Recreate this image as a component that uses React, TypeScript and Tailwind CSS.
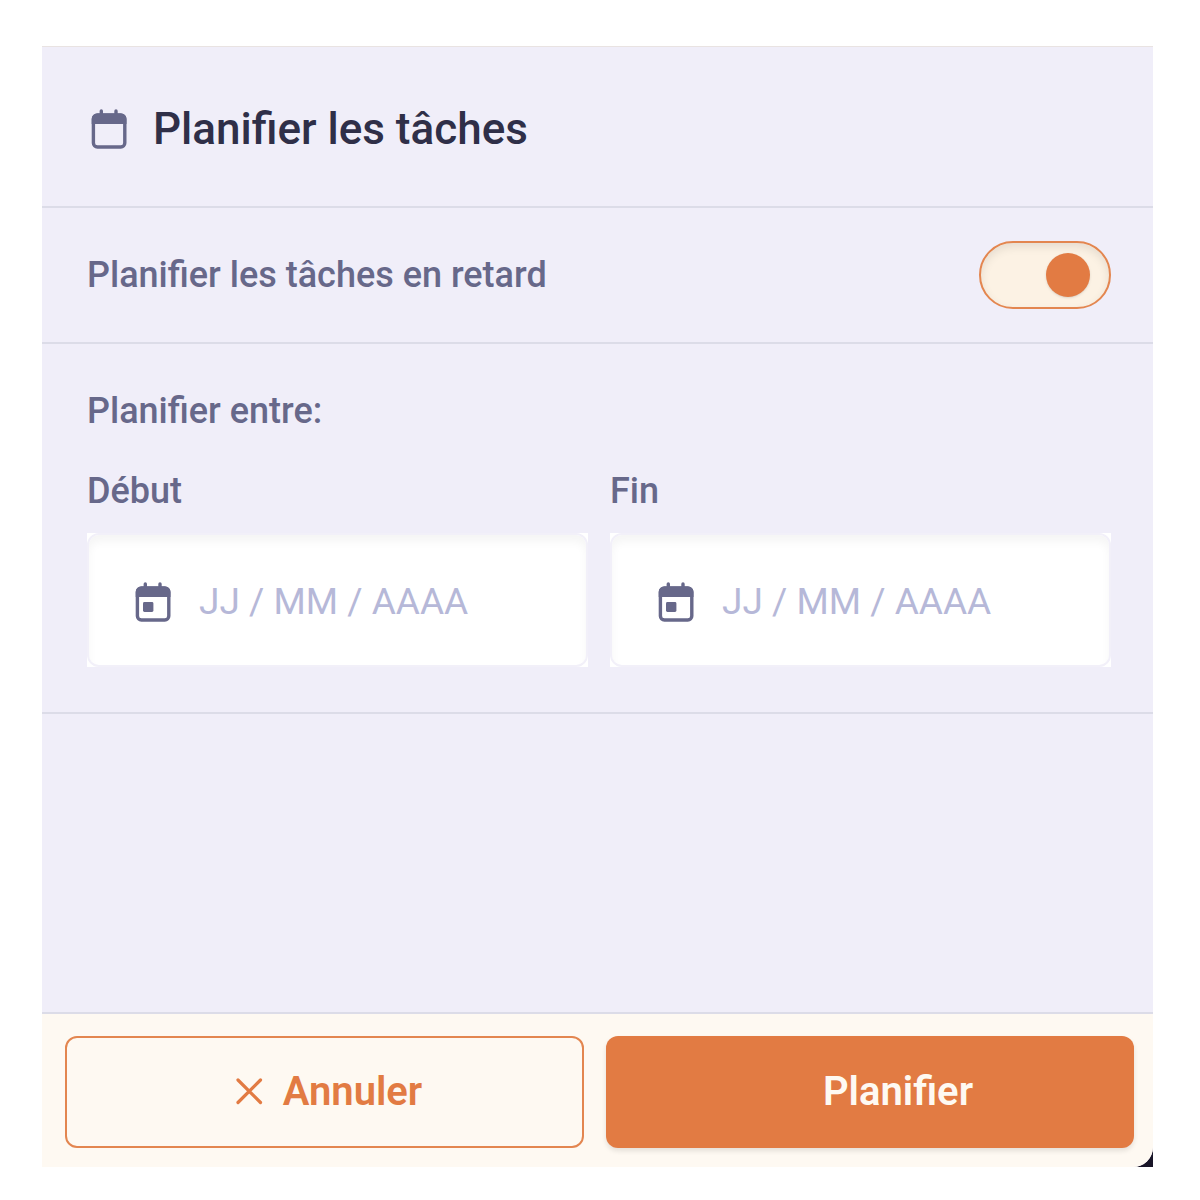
import React, { useState } from 'react';

interface CalendarIconProps {
  className?: string;
  withDay?: boolean;
}

const CalendarIcon: React.FC<CalendarIconProps> = ({ className, withDay = false }) => (
  <svg viewBox="0 0 36 40" className={className} fill="none" aria-hidden="true">
    <path d="M10.3 2v6M25 2v6" stroke="currentColor" strokeWidth="3.4" strokeLinecap="round" />
    <rect x="2.4" y="6" width="31.4" height="32" rx="4" stroke="currentColor" strokeWidth="3.4" />
    <path d="M.7 15V10a5.5 5.5 0 0 1 5.5-5.5H30a5.5 5.5 0 0 1 5.5 5.5v5z" fill="currentColor" />
    {withDay && <rect x="8" y="20" width="10.4" height="10" rx="1.4" fill="currentColor" />}
  </svg>
);

const CrossIcon: React.FC<{ className?: string }> = ({ className }) => (
  <svg viewBox="0 0 46 46" className={className} fill="none" aria-hidden="true">
    <path d="M11 11l22.5 22.5M33.5 11L11 33.5" stroke="currentColor" strokeWidth="3.2" strokeLinecap="round" />
  </svg>
);

interface DateFieldProps {
  id: string;
  label: string;
  value: string;
  onChange: (value: string) => void;
}

const DateField: React.FC<DateFieldProps> = ({ id, label, value, onChange }) => (
  <div className="min-w-0 flex-1">
    <label htmlFor={id} className="block text-[36px] leading-[60px] font-medium">
      {label}
    </label>
    <div className="mt-3 bg-white">
      <div className="flex h-[134px] items-center gap-7 rounded-xl border-2 border-[#f2f0f9] px-[46px] pt-1 shadow-[inset_0_7px_9px_rgba(0,0,0,0.04)]">
        <CalendarIcon className="h-10 w-9 shrink-0" withDay />
        <input
          id={id}
          type="text"
          value={value}
          onChange={(e) => onChange(e.target.value)}
          placeholder="JJ / MM / AAAA"
          className="w-full min-w-0 bg-transparent text-[37px] leading-[60px] outline-none placeholder:text-[#b6b8d8]"
        />
      </div>
    </div>
  </div>
);

export default function App() {
  const [late, setLate] = useState(true);
  const [start, setStart] = useState('');
  const [end, setEnd] = useState('');

  return (
    <div className="min-h-screen bg-white pt-[46px] pr-[47px] pb-8 pl-[42px] font-['Roboto',sans-serif] text-[#67688a]">
      <div className="bg-[#191528]">
        <form
          className="overflow-hidden rounded-br-[20px] bg-[#f0eef9]"
          onSubmit={(e) => e.preventDefault()}
        >
          {/* Header */}
          <div className="flex h-[162px] items-center gap-[26px] border-t border-b-2 border-t-[#e9e3e2] border-b-[#dcdce8] pt-1 pr-[42px] pl-[49px]">
            <CalendarIcon className="h-10 w-9 shrink-0" />
            <h2 className="text-[44px] leading-[60px] font-medium text-[#2f2f48]">
              Planifier les tâches
            </h2>
          </div>

          {/* Late tasks */}
          <div className="flex h-[136px] items-center justify-between border-b-2 border-[#dcdce8] pr-[42px] pl-[45px]">
            <label htmlFor="late" className="text-[36px] leading-[60px] font-medium">
              Planifier les tâches en retard
            </label>
            <input
              id="late"
              type="checkbox"
              role="switch"
              checked={late}
              onChange={(e) => setLate(e.target.checked)}
              className="flex h-[68px] w-[132px] shrink-0 appearance-none items-center rounded-full border-2 border-[#e38650] bg-[#fcf2e4] px-[19px] shadow-[inset_0_4px_10px_rgba(0,0,0,0.09)] before:size-11 before:rounded-full before:bg-[#e27b43] before:shadow-sm before:content-[''] checked:justify-end"
            />
          </div>

          {/* Date range */}
          <div className="border-b-2 border-[#dcdce8] pt-[37px] pr-[42px] pb-[45px] pl-[45px]">
            <p className="text-[36px] leading-[60px] font-medium">Planifier entre:</p>
            <div className="mt-5 flex gap-[22px]">
              <DateField id="start" label="Début" value={start} onChange={setStart} />
              <DateField id="end" label="Fin" value={end} onChange={setEnd} />
            </div>
          </div>

          <div className="h-[298px]" />

          {/* Actions */}
          <div className="grid grid-cols-[519fr_528fr] gap-[22px] border-t-2 border-[#dcdce8] bg-[#fef9f2] pt-[22px] pr-[19px] pb-[19px] pl-[23px] text-[40px] leading-[60px] font-semibold">
            <button
              type="button"
              className="flex h-28 items-center justify-center gap-[10px] rounded-xl border-2 border-[#e38650] text-[#e27b43]"
            >
              <CrossIcon className="size-[46px]" />
              Annuler
            </button>
            <button
              type="submit"
              className="flex h-28 items-center justify-center gap-[10px] rounded-xl bg-[#e27b43] text-[#fef9f2] shadow-[0_3px_5px_rgba(0,0,0,0.1)]"
            >
              <span className="size-[46px]" />
              Planifier
            </button>
          </div>
        </form>
      </div>
    </div>
  );
}
